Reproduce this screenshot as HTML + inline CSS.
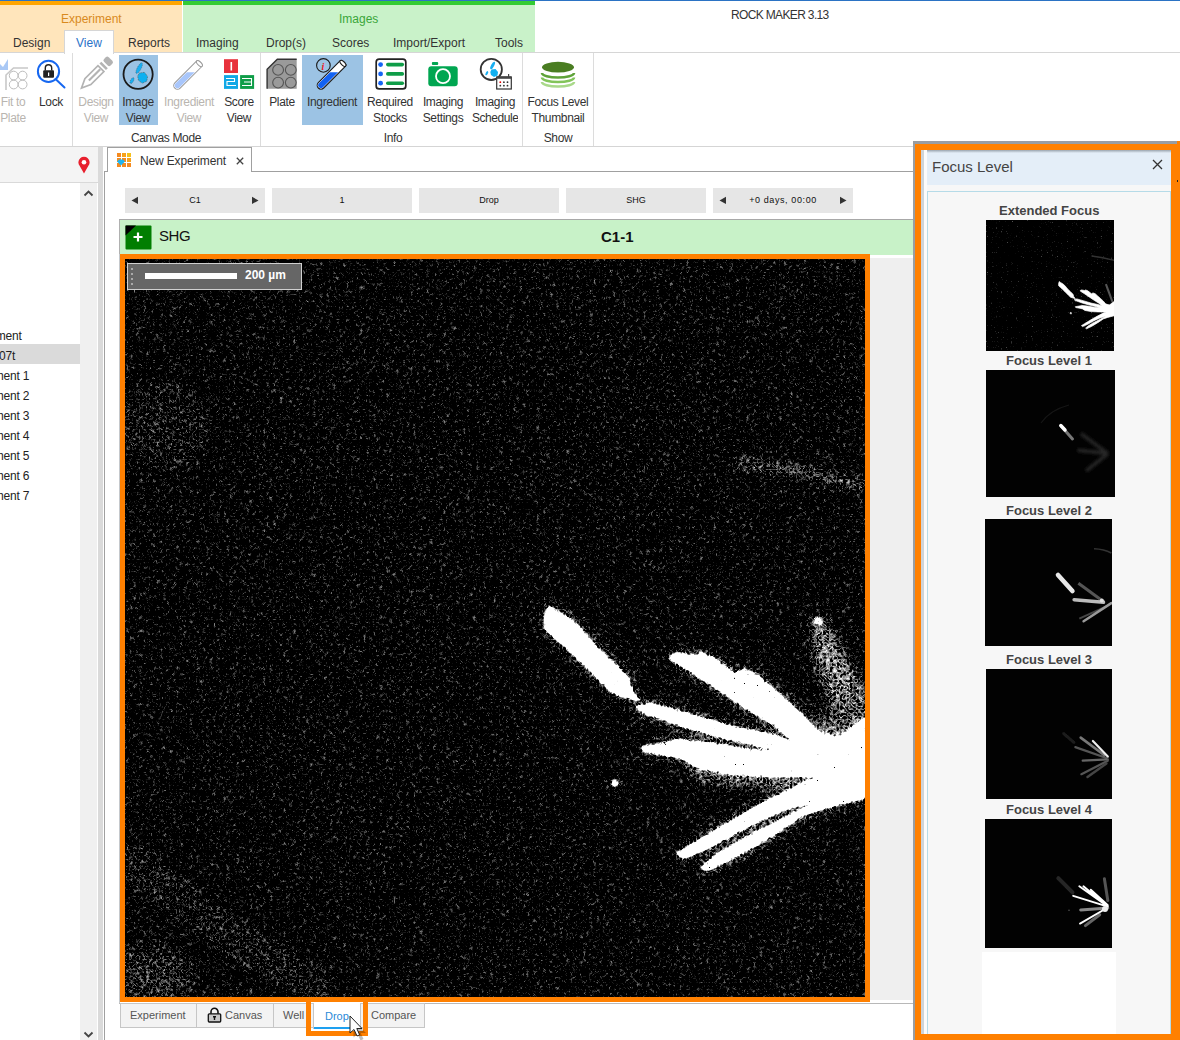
<!DOCTYPE html>
<html><head><meta charset="utf-8">
<style>
*{margin:0;padding:0;box-sizing:border-box}
html,body{width:1180px;height:1040px;overflow:hidden;background:#fff;font-family:"Liberation Sans",sans-serif;color:#222;position:relative}
.a{position:absolute}
.t{position:absolute;white-space:nowrap;line-height:1}
.c{text-align:center}
.rb{font-size:12px;letter-spacing:-0.35px;color:#333;width:80px;text-align:center}
.dis{color:#b9b5b0}
.ls{font-size:12px;letter-spacing:-0.2px;color:#222}
.bt{font-size:11px;color:#555}
.fl{font-size:13px;font-weight:bold;color:#444}
.th{background:#000;overflow:hidden}
.nv{font-size:9px;color:#111;width:140px;text-align:center}
</style></head><body>
<!-- title bar / tabs -->
<div class="a" style="left:0;top:0;width:1180px;height:1px;background:#2b73c4"></div>
<div class="a" style="left:0;top:1px;width:182px;height:52px;background:#ffe5bb"></div>
<div class="a" style="left:0;top:1px;width:182px;height:4px;background:#ffa500"></div>
<div class="a" style="left:183px;top:1px;width:352px;height:52px;background:#c9f2c9"></div>
<div class="a" style="left:183px;top:1px;width:352px;height:4px;background:#33cc33"></div>
<div class="a" style="left:0;top:52px;width:1180px;height:1px;background:#d6d6d6"></div>
<div class="t" id="ttl" style="left:731px;top:9px;font-size:12px;letter-spacing:-0.65px;color:#333">ROCK MAKER 3.13</div>
<div class="t" style="left:61px;top:13px;font-size:12px;color:#d98a1e">Experiment</div>
<div class="t" style="left:339px;top:13px;font-size:12px;color:#3aa63a">Images</div>
<!-- View tab -->
<div class="a" style="left:64px;top:30px;width:50px;height:24px;background:#fff;border:1px solid #d6d6d6;border-bottom:none"></div>
<div class="t" style="left:13px;top:37px;font-size:12px;color:#333">Design</div>
<div class="t" style="left:76px;top:37px;font-size:12px;color:#2a72c8">View</div>
<div class="t" style="left:128px;top:37px;font-size:12px;color:#333">Reports</div>
<div class="t" style="left:196px;top:37px;font-size:12px;color:#333">Imaging</div>
<div class="t" style="left:266px;top:37px;font-size:12px;color:#333">Drop(s)</div>
<div class="t" style="left:332px;top:37px;font-size:12px;color:#333">Scores</div>
<div class="t" style="left:393px;top:37px;font-size:12px;color:#333">Import/Export</div>
<div class="t" style="left:495px;top:37px;font-size:12px;color:#333">Tools</div>

<!-- ribbon -->
<!-- ribbon separators -->
<div class="a" style="left:72px;top:53px;width:1px;height:93px;background:#dcdcdc"></div>
<div class="a" style="left:260px;top:53px;width:1px;height:93px;background:#dcdcdc"></div>
<div class="a" style="left:522px;top:53px;width:1px;height:93px;background:#dcdcdc"></div>
<div class="a" style="left:593px;top:53px;width:1px;height:93px;background:#dcdcdc"></div>
<!-- highlights -->
<div class="a" style="left:119px;top:55px;width:39px;height:70px;background:#9cc3e4"></div>
<div class="a" style="left:302px;top:55px;width:61px;height:70px;background:#9cc3e4"></div>
<!-- ribbon texts -->
<div class="t rb dis" style="left:-27px;top:96px">Fit to</div>
<div class="t rb dis" style="left:-27px;top:112px">Plate</div>
<div class="t rb" style="left:11px;top:96px">Lock</div>
<div class="t rb dis" style="left:56px;top:96px">Design</div>
<div class="t rb dis" style="left:56px;top:112px">View</div>
<div class="t rb" style="left:98px;top:96px">Image</div>
<div class="t rb" style="left:98px;top:112px">View</div>
<div class="t rb dis" style="left:149px;top:96px">Ingredient</div>
<div class="t rb dis" style="left:149px;top:112px">View</div>
<div class="t rb" style="left:199px;top:96px">Score</div>
<div class="t rb" style="left:199px;top:112px">View</div>
<div class="t rb" style="left:126px;top:132px">Canvas Mode</div>
<div class="t rb" style="left:242px;top:96px">Plate</div>
<div class="t rb" style="left:292px;top:96px">Ingredient</div>
<div class="t rb" style="left:350px;top:96px">Required</div>
<div class="t rb" style="left:350px;top:112px">Stocks</div>
<div class="t rb" style="left:353px;top:132px">Info</div>
<div class="t rb" style="left:403px;top:96px">Imaging</div>
<div class="t rb" style="left:403px;top:112px">Settings</div>
<div class="t rb" style="left:455px;top:96px">Imaging</div>
<div class="t rb" style="top:112px;width:46px;overflow:hidden;left:472px;text-align:left;letter-spacing:-0.45px">Schedule</div>
<div class="t rb" style="left:518px;top:96px">Focus Level</div>
<div class="t rb" style="left:518px;top:112px">Thumbnail</div>
<div class="t rb" style="left:518px;top:132px">Show</div>
<!-- ribbon icons -->
<svg class="a" style="left:0;top:54px" width="600" height="40" viewBox="0 54 600 40">
 <!-- fit to plate -->
 <path d="M0 64 L3 67 L8 59 L8 70 L0 70 Z" fill="#a9c8f5"/>
 <path d="M6 90 V75 L13.5 68 H28" fill="none" stroke="#c8c8c8" stroke-width="1.6"/>
 <g fill="none" stroke="#bdbdbd" stroke-width="1"><circle cx="13.7" cy="75.6" r="4.4"/><circle cx="22.6" cy="75.6" r="4.4"/><circle cx="13.7" cy="84.5" r="4.4"/><circle cx="22.6" cy="84.5" r="4.4"/></g>
 <!-- lock -->
 <circle cx="48.5" cy="71.4" r="10.6" fill="none" stroke="#1667f0" stroke-width="2"/>
 <path d="M55.5 79 L64.5 87.5" stroke="#1667f0" stroke-width="2" stroke-linecap="round"/>
 <path d="M45.3 70.5 V68 a3.2 3.2 0 0 1 6.4 0 V70.5" fill="none" stroke="#222" stroke-width="1.4"/>
 <rect x="43.2" y="70.2" width="10.8" height="7.6" rx="1" fill="#222"/>
 <path d="M48.6 72.5 v3.4" stroke="#fff" stroke-width="1.2"/>
 <!-- design view pencil -->
 <g transform="translate(81.5 88) rotate(-45)" fill="none" stroke="#b3b3b3" stroke-width="1.7">
  <path d="M0 0 L9 -4.2 H27.5 V4.2 H9 Z"/>
  <path d="M10.5 0 H26.5" stroke-width="2.2"/>
  <rect x="30" y="-4.6" width="2.6" height="9.2" fill="#b3b3b3" stroke="none"/>
  <rect x="34.5" y="-4.6" width="6.5" height="9.2" rx="2" fill="#b3b3b3" stroke="none"/>
 </g>
 <!-- image view -->
 <circle cx="138.1" cy="74.2" r="14.6" fill="none" stroke="#1a1a1a" stroke-width="1.8"/>
  <ellipse cx="139.2" cy="68.2" rx="6" ry="1.9" transform="rotate(-62 139.2 68.2)" fill="#18aef0" stroke="#3a5060" stroke-width="0.5" stroke-dasharray="1 1"/>
 <ellipse cx="132" cy="80.6" rx="3.2" ry="1.5" transform="rotate(-62 132 80.6)" fill="#18aef0" stroke="#3a5060" stroke-width="0.5" stroke-dasharray="1 1"/>
 <path d="M139.5 73 L144.5 72.3 L147.6 76.5 L146.8 81.2 L142.3 83.2 L138.5 80.5 L137.6 76 Z" fill="#0fb0f0" stroke="#6a5040" stroke-width="0.6" stroke-dasharray="1 0.8"/>
<!-- ingredient view test tube -->
 <clipPath id="cl1"><rect x="150" y="72.3" width="60" height="30"/></clipPath>
 <g transform="translate(177.5 85.5) rotate(-45)">
  <path d="M0 -3.8 H31 a1.8 3.8 0 0 1 0 7.6 H0 a3.8 3.8 0 0 1 0 -7.6 Z" fill="#fff" stroke="#9a9a9a" stroke-width="1"/>
  <ellipse cx="31" cy="0" rx="1.8" ry="3.8" fill="#fff" stroke="#9a9a9a" stroke-width="1"/>
 </g>
 <g clip-path="url(#cl1)"><g transform="translate(177.5 85.5) rotate(-45)"><path d="M0 -2.8 H28 V2.8 H0 a2.8 2.8 0 0 1 0 -5.6 Z" fill="#a8c6fb"/></g></g>
 <!-- score view -->
 <rect x="224" y="59.2" width="14" height="13.8" fill="#e8323c"/>
 <rect x="230.5" y="62" width="1.6" height="8.5" fill="#fff"/>
 <rect x="224" y="75.1" width="14" height="13.8" fill="#12a8e6"/>
 <path d="M226 78.5 H234.5 V81.5 H227 V85.5 H236" fill="none" stroke="#fff" stroke-width="1.1"/>
 <rect x="240.1" y="75.1" width="14" height="13.8" fill="#0f9d48"/>
 <path d="M242 78.5 H251.5 V85.5 H242 M244 82 H251.5" fill="none" stroke="#fff" stroke-width="1.1"/>
 <!-- plate -->
 <path d="M267.1 88.7 V69.3 L277.3 59.3 H296.7 V88.7 Z" fill="#9a9a9a"/>
 <path d="M267.1 88.7 V69.3 L277.3 59.3 H296.7" fill="none" stroke="#333" stroke-width="1.4"/>
 <g fill="none" stroke="#555" stroke-width="1.1"><circle cx="278.1" cy="69.9" r="5.4"/><circle cx="290.8" cy="69.9" r="5.4"/><circle cx="278.1" cy="82.6" r="5.4"/><circle cx="290.8" cy="82.6" r="5.4"/></g>
 <!-- ingredient -->
 <clipPath id="cl2"><rect x="300" y="72.2" width="60" height="30"/></clipPath>
 <g transform="translate(321 85.3) rotate(-45)">
  <path d="M0 -3.8 H31 a1.8 3.8 0 0 1 0 7.6 H0 a3.8 3.8 0 0 1 0 -7.6 Z" fill="#fff" stroke="#1a1a1a" stroke-width="1.1"/>
  <ellipse cx="31" cy="0" rx="1.8" ry="3.8" fill="#fff" stroke="#1a1a1a" stroke-width="1.1"/>
 </g>
 <g clip-path="url(#cl2)"><g transform="translate(321 85.3) rotate(-45)"><path d="M0 -2.8 H28 V2.8 H0 a2.8 2.8 0 0 1 0 -5.6 Z" fill="#1262f2"/></g></g>
 <circle cx="323.4" cy="65.4" r="6.8" fill="#9cc3e4" stroke="#1a1a1a" stroke-width="1.1"/>
 <text x="321.5" y="70" font-family="Liberation Serif" font-style="italic" font-weight="bold" font-size="10" fill="#ee1c24">i</text>
 <!-- required stocks -->
 <rect x="376.2" y="59.1" width="29.6" height="29.8" rx="3" fill="#fff" stroke="#222" stroke-width="1.7"/>
 <g fill="#1464f5"><circle cx="380.6" cy="64.6" r="2.4"/><circle cx="380.6" cy="73.9" r="2.4"/><circle cx="380.6" cy="83.2" r="2.4"/></g>
 <g stroke="#0f9d48" stroke-width="3.6" stroke-linecap="round"><path d="M387.8 64.6 H402.3"/><path d="M387.8 73.9 H402.3"/><path d="M387.8 83.2 H402.3"/></g>
 <!-- camera -->
 <rect x="428.3" y="66.3" width="29.4" height="19.9" rx="3" fill="#00a651"/>
 <rect x="431.9" y="62" width="6.3" height="3" rx="1" fill="#00a651"/>
 <circle cx="443" cy="76.2" r="7" fill="#00a651" stroke="#fff" stroke-width="1.8"/>
 <!-- imaging schedule -->
 <circle cx="491.3" cy="69.4" r="10.6" fill="none" stroke="#333" stroke-width="1.8"/>
  <ellipse cx="492.6" cy="65.5" rx="4.2" ry="1.5" transform="rotate(-62 492.6 65.5)" fill="#18aef0"/>
 <ellipse cx="486.8" cy="73.2" rx="2.3" ry="1.1" transform="rotate(-62 486.8 73.2)" fill="#18aef0"/>
 <path d="M491.5 69.5 L495.5 69 L498 72 L497.5 75.5 L494 77 L491 75 L490.3 72 Z" fill="#10b0f0"/>
<rect x="496.7" y="77" width="14.6" height="12" fill="#fff" stroke="#333" stroke-width="1.2"/>
 <rect x="496.7" y="76.4" width="14.6" height="2.4" fill="#444"/>
 <rect x="508" y="74" width="1.2" height="3" fill="#444"/>
 <g fill="#333"><circle cx="500.3" cy="82.2" r="0.9" fill="#e00"/><circle cx="503.9" cy="82.2" r="0.9"/><circle cx="507.5" cy="82.2" r="0.9"/><circle cx="500.3" cy="85.7" r="0.9"/><circle cx="503.9" cy="85.7" r="0.9"/><circle cx="507.5" cy="85.7" r="0.9"/></g>
 <!-- focus level -->
 <path d="M542 82 a16 4.5 0 0 0 32 0" fill="none" stroke="#a9d98a" stroke-width="2.6"/>
 <path d="M542 77.5 a16 4.5 0 0 0 32 0" fill="none" stroke="#82c45a" stroke-width="2.6"/>
 <path d="M542 73 a16 4.5 0 0 0 32 0" fill="none" stroke="#5fa33a" stroke-width="2.6"/>
 <ellipse cx="558" cy="67.2" rx="16" ry="5.4" fill="#4a7d22"/>
</svg>

<div class="a" style="left:0;top:146px;width:1180px;height:1px;background:#d5d5d5"></div>

<!-- left panel -->
<div class="a" style="left:0;top:147px;width:98px;height:35px;background:#f4f4f4"></div>
<div class="a" style="left:0;top:182px;width:98px;height:1px;background:#d9d9d9"></div>
<div class="a" style="left:80px;top:183px;width:17px;height:857px;background:#f0f0f0"></div>
<div class="a" style="left:98px;top:147px;width:5px;height:893px;background:#dadada"></div>
<div class="a" style="left:104px;top:171px;width:1px;height:869px;background:#a0a0a0"></div>


<!-- left panel contents -->
<svg class="a" style="left:76px;top:155px" width="16" height="20" viewBox="0 0 16 20">
 <path d="M8 18.5 L3.6 10.8 A5.6 5.6 0 1 1 12.4 10.8 Z" fill="#e8202e"/>
 <circle cx="8" cy="7.2" r="2.3" fill="#fff"/>
</svg>
<svg class="a" style="left:83px;top:188px" width="12" height="10" viewBox="0 0 12 10"><path d="M1.5 7.5 L5.5 3.5 L9.5 7.5" fill="none" stroke="#444" stroke-width="1.8"/></svg>
<svg class="a" style="left:83px;top:1030px" width="12" height="10" viewBox="0 0 12 10"><path d="M1.5 2.5 L5.5 6.5 L9.5 2.5" fill="none" stroke="#444" stroke-width="1.8"/></svg>
<div class="a" style="left:0;top:344px;width:80px;height:20px;background:#dadada"></div>
<div class="t ls" style="left:-37px;top:330px">Experiment</div>
<div class="t ls" style="left:-14px;top:350px">0307t</div>
<div class="t ls" style="left:-39px;top:370px">Experiment 1</div>
<div class="t ls" style="left:-39px;top:390px">Experiment 2</div>
<div class="t ls" style="left:-39px;top:410px">Experiment 3</div>
<div class="t ls" style="left:-39px;top:430px">Experiment 4</div>
<div class="t ls" style="left:-39px;top:450px">Experiment 5</div>
<div class="t ls" style="left:-39px;top:470px">Experiment 6</div>
<div class="t ls" style="left:-39px;top:490px">Experiment 7</div>

<!-- doc tab strip -->
<div class="a" style="left:104px;top:171px;width:809px;height:1px;background:#a0a0a0"></div>
<div class="a" style="left:107px;top:147px;width:145px;height:25px;background:#fff;border:1px solid #a0a0a0;border-bottom:none"></div>


<svg class="a" style="left:116px;top:152px" width="16" height="16" viewBox="0 0 16 16">
 <g fill="#f7a21b"><rect x="1" y="1" width="4" height="4" fill="#f58a1f"/><rect x="6" y="1" width="4" height="4"/><rect x="11" y="1" width="4" height="4" fill="#f5c01b"/>
 <rect x="1" y="6" width="4" height="4" fill="#f58a1f"/><rect x="6" y="6" width="4" height="4" fill="#f58a1f"/><rect x="11" y="6" width="4" height="4"/>
 <rect x="1" y="11" width="4" height="4" fill="#f58a1f"/><rect x="6" y="11" width="4" height="4" fill="#f58a1f"/><rect x="11" y="11" width="4" height="4" fill="#f58a1f"/></g>
 <path d="M1 9.5 L3 7.5 H7 L9 9.5 L5 13.5 Z" fill="#1fb5f0"/>
</svg>
<div class="t" style="left:140px;top:155px;font-size:12px;letter-spacing:-0.15px;color:#333">New Experiment</div>
<svg class="a" style="left:236px;top:157px" width="8" height="8" viewBox="0 0 8 8"><path d="M0.8 0.8 L7.2 7.2 M7.2 0.8 L0.8 7.2" stroke="#444" stroke-width="1.3"/></svg>

<!-- nav buttons -->
<div class="a" style="left:125px;top:188px;width:140px;height:25px;background:#e6e6e6"></div>
<div class="a" style="left:272px;top:188px;width:140px;height:25px;background:#e6e6e6"></div>
<div class="a" style="left:419px;top:188px;width:140px;height:25px;background:#e6e6e6"></div>
<div class="a" style="left:566px;top:188px;width:140px;height:25px;background:#e6e6e6"></div>
<div class="a" style="left:713px;top:188px;width:140px;height:25px;background:#e6e6e6"></div>


<svg class="a" style="left:0;top:0" width="900" height="220" viewBox="0 0 900 220">
 <g fill="#333">
 <path d="M131.5 200.4 L138 196.8 V204 Z"/><path d="M258.5 200.4 L252 196.8 V204 Z"/>
 <path d="M719.5 200.4 L726 196.8 V204 Z"/><path d="M846.5 200.4 L840 196.8 V204 Z"/>
 </g>
</svg>
<div class="t nv" style="left:125px;top:196px">C1</div>
<div class="t nv" style="left:272px;top:196px">1</div>
<div class="t nv" style="left:419px;top:196px">Drop</div>
<div class="t nv" style="left:566px;top:196px">SHG</div>
<div class="t nv" style="left:713px;top:196px;letter-spacing:0.6px">+0 days, 00:00</div>

<!-- green header -->
<div class="a" style="left:119px;top:219px;width:794px;height:36px;background:#c8f2c8;border-top:1px solid #a8a8a8;border-left:1px solid #b0b0b0"></div>


<svg class="a" style="left:125px;top:225px" width="27" height="25" viewBox="0 0 27 25">
 <rect x="0.5" y="0.5" width="26" height="24" rx="1" fill="#017e01"/>
 <path d="M0.5 0.5 H11 L0.5 10.5 Z" fill="#000"/>
 <path d="M8.5 12 H17.5 M13 7.5 V16.5" stroke="#fff" stroke-width="2.2"/>
</svg>
<div class="t" style="left:159px;top:228px;font-size:15px;letter-spacing:-0.4px;color:#111">SHG</div>
<div class="t" style="left:601px;top:229px;font-size:15px;font-weight:bold;color:#111">C1-1</div>

<!-- image -->
<div class="a" style="left:870px;top:258px;width:43px;height:742px;background:#efefef"></div>
<div class="a" style="left:119px;top:254px;width:1px;height:750px;background:#c4c8cc"></div>
<div class="a" style="left:120px;top:254px;width:750px;height:748px;background:#ff8000"></div>
<div class="a" id="img" style="left:125px;top:259px;width:740px;height:738px;background:#0a0a0a;overflow:hidden"><svg width="740" height="738" viewBox="125 259 740 738" style="position:absolute;left:0;top:0">
<defs>
<filter id="fx" x="125" y="259" width="740" height="738" filterUnits="userSpaceOnUse" color-interpolation-filters="sRGB">
 <feGaussianBlur in="SourceGraphic" stdDeviation="1" result="core"/>
 <feGaussianBlur in="SourceGraphic" stdDeviation="7" result="halo"/>
 <feComposite in="core" in2="halo" operator="arithmetic" k2="0.9" k3="0.35" result="mask"/>
 <feTurbulence type="turbulence" baseFrequency="0.3" numOctaves="1" seed="3" result="t"/>
 <feColorMatrix in="t" type="matrix" values="-1 0 0 0 1  -1 0 0 0 1  -1 0 0 0 1  0 0 0 0 1" result="inv"/>
 <feTurbulence type="fractalNoise" baseFrequency="0.3" numOctaves="1" seed="9" result="n2"/>
 <feColorMatrix in="n2" type="matrix" values="1 0 0 0 0  1 0 0 0 0  1 0 0 0 0  0 0 0 0 1" result="g2"/>
 <feComposite in="inv" in2="g2" operator="arithmetic" k2="0.5" k3="0.3" result="base"/>
 <feComposite in="base" in2="mask" operator="arithmetic" k2="2" k3="1.0" k4="-1.248" result="sum"/>
 <feComponentTransfer in="sum"><feFuncR type="linear" slope="2.3"/><feFuncG type="linear" slope="2.3"/><feFuncB type="linear" slope="2.3"/><feFuncA type="linear" slope="0" intercept="1"/></feComponentTransfer>
</filter>
<filter id="fxb" x="-50%" y="-50%" width="200%" height="200%"><feGaussianBlur stdDeviation="10"/></filter>
<filter id="fxc" x="-50%" y="-50%" width="200%" height="200%"><feGaussianBlur stdDeviation="4"/></filter>
</defs>
<g filter="url(#fx)">
<rect x="125" y="259" width="740" height="738" fill="#000"/>
<ellipse cx="150" cy="975" rx="45" ry="30" fill="#161616" filter="url(#fxb)"/>
<path d="M125 850 Q200 930 330 990" fill="none" stroke="#0c0c0c" stroke-width="40" filter="url(#fxb)"/>
<ellipse cx="165" cy="425" rx="45" ry="45" fill="#0d0d0d" filter="url(#fxb)"/>
<path d="M735 462 Q800 470 866 486" fill="none" stroke="#333" stroke-width="9" filter="url(#fxc)"/>
<polygon points="812,624 822,616 838,640 852,668 866,690 866,752 846,735 828,698 814,660" fill="#3a3a3a" filter="url(#fxc)"/>
<polygon points="683,770 760,772 812,782 820,792 770,790 700,782" fill="#2a2a2a" filter="url(#fxc)"/>
<circle cx="845" cy="745" r="38" fill="#2a2a2a" filter="url(#fxb)"/>
<ellipse cx="818" cy="621" rx="4.5" ry="3.5" fill="#bbb"/>
<polygon points="548.5,605.4 555.2,610.1 572.5,620.5 582.9,630.9 596.7,647.0 611.7,660.9 627.9,677.0 632.5,690.9 638.3,697.8 640.7,701.1 632.7,699.4 614.4,693.9 600.6,681.3 582.1,662.8 566.0,647.8 554.4,637.4 545.2,629.4 544.7,616.6" fill="#fff"/>
<polygon points="670.7,655.1 677.8,652.5 695.6,656 700.9,652.5 713.4,657.8 734.7,673.8 743.6,669.4 756.1,673.8 770.3,686.3 784.6,698.7 802.4,714.7 816.6,730.8 838,738 866,718 866,798 829,807 802.4,816 775.7,834 740,855 706.3,871.5 701,867.5 717,854 749,835.5 784.6,817.7 818,801 784.6,810 749,826 713.4,845.6 683.1,859 676.5,853.5 694,843 731.2,820.8 766.8,801 802.4,783 818,777 772.4,776.2 731.7,774.2 697.1,768.1 680.8,758 644.2,751.8 641.2,746.8 670.7,742.2 676.8,739.6 711.4,743.2 752,750.3 784,751 762.2,746.8 721.5,737.6 680.8,725.9 638.1,711.2 636.1,706.1 650.3,703 691,714.2 731.7,726.4 772.4,734.6 794,743 777,727 750,711 723.5,693.2 696.5,675.6 669.5,658.8" fill="#fff"/>
<circle cx="615" cy="783" r="3" fill="#fff"/>
</g>
</svg></div>

<div class="a" style="left:119px;top:1003px;width:794px;height:1px;background:#b8b8b8"></div>

<div class="a" style="left:127px;top:263px;width:175px;height:27px;background:#666;border:1px solid #d0d0d0"></div>
<div class="a" style="left:131px;top:268px;width:1.5px;height:19px;background:repeating-linear-gradient(#aaa 0 2px,transparent 2px 5px)"></div>
<div class="a" style="left:145px;top:273px;width:92px;height:6px;background:#fff"></div>
<div class="t" style="left:245px;top:269px;font-size:12px;font-weight:bold;color:#fff">200 µm</div>

<!-- bottom tabs -->
<div class="a" style="left:120px;top:1003px;width:305px;height:25px;background:#f3f3f3;border:1px solid #c6c6c6"></div>
<div class="a" style="left:196px;top:1003px;width:1px;height:25px;background:#c6c6c6"></div>
<div class="a" style="left:273px;top:1003px;width:1px;height:25px;background:#c6c6c6"></div>
<div class="a" style="left:367px;top:1003px;width:1px;height:25px;background:#c6c6c6"></div>
<div class="a" style="left:313px;top:1003px;width:48px;height:26px;background:#fff;border-left:1px solid #c6c6c6;border-right:1px solid #c6c6c6"></div>
<div class="a" style="left:314px;top:1027px;width:46px;height:2px;background:#1ea0f0"></div>
<div class="t bt" style="left:130px;top:1010px">Experiment</div>
<svg class="a" style="left:207px;top:1007px" width="15" height="16" viewBox="0 0 15 16">
 <path d="M4 7 V4.8 a3.5 3.5 0 0 1 7 0 V7" fill="none" stroke="#111" stroke-width="1.6"/>
 <rect x="1.3" y="6.8" width="12.4" height="8.2" rx="1" fill="#c8c8c8" stroke="#111" stroke-width="1.3"/>
 <path d="M6 9.7 H9 M7.5 9.7 V13" stroke="#111" stroke-width="1.4"/>
</svg>
<div class="t bt" style="left:225px;top:1010px">Canvas</div>
<div class="t bt" style="left:283px;top:1010px">Well</div>
<div class="t bt" style="left:325px;top:1011px;color:#2a8ad8">Drop</div>
<div class="t bt" style="left:371px;top:1010px">Compare</div>
<!-- drop highlight -->
<div class="a" style="left:306px;top:1000px;width:62px;height:36px;border:5px solid #ff8000;border-top:none"></div>
<!-- cursor -->
<svg class="a" style="left:346px;top:1012px" width="24" height="28" viewBox="0 0 24 28">
 <path d="M6 7 L6 24 L10 20.5 L13 27 L16 25.6 L13.2 19.5 L18.5 19.5 Z" fill="#000" opacity="0.25" transform="translate(1.5 1.5)"/>
 <path d="M4 4 L4 21 L8 17.5 L11 24 L13.6 22.8 L10.8 16.5 L16 16.5 Z" fill="#fff" stroke="#222" stroke-width="1"/>
</svg>


<!-- focus panel -->
<div class="a" style="left:913px;top:141px;width:264px;height:899px;background:#999da2"></div>
<div class="a" style="left:915px;top:144px;width:265px;height:896px;background:#ff8000"></div>
<div class="a" style="left:921px;top:150px;width:250px;height:884px;background:#f7f7f7"></div>
<div class="a" style="left:921px;top:150px;width:250px;height:35px;background:#e4eef8"></div>
<div class="a" style="left:927px;top:191px;width:244px;height:843px;border:1px solid #b6dbe8;border-bottom:none"></div>

<div class="a" style="left:921px;top:150px;width:250px;height:3px;background:linear-gradient(#9aa4ae,#e4eef8)"></div>
<div class="a" style="left:921px;top:150px;width:3px;height:884px;background:#cfd4d8"></div>
<div class="a" style="left:924px;top:150px;width:3px;height:884px;background:#fbfbfb"></div>
<div class="t" style="left:932px;top:159px;font-size:15px;color:#444">Focus Level</div>
<svg class="a" style="left:1152px;top:159px" width="11" height="11" viewBox="0 0 11 11"><path d="M1 1 L10 10 M10 1 L1 10" stroke="#333" stroke-width="1.3"/></svg>
<div class="t fl" style="left:999px;top:204px">Extended Focus</div>
<div class="t fl" style="left:1006px;top:354px">Focus Level 1</div>
<div class="t fl" style="left:1006px;top:504px">Focus Level 2</div>
<div class="t fl" style="left:1006px;top:653px">Focus Level 3</div>
<div class="t fl" style="left:1006px;top:803px">Focus Level 4</div>
<div class="a" style="left:982px;top:952px;width:134px;height:82px;background:#fff"></div>
<div class="a th" id="th0" style="left:986px;top:220px;width:128px;height:131px"><svg width="128" height="131" viewBox="986 220 128 131" style="position:absolute;left:0;top:0"><defs><filter id="tb0" x="-20%" y="-20%" width="140%" height="140%"><feGaussianBlur stdDeviation="0.5"/></filter><filter id="tbb0" x="-50%" y="-50%" width="200%" height="200%"><feGaussianBlur stdDeviation="1.5"/></filter></defs><filter id="tn" x="986" y="220" width="128" height="131" filterUnits="userSpaceOnUse" color-interpolation-filters="sRGB"><feTurbulence type="fractalNoise" baseFrequency="0.8" seed="4"/><feColorMatrix type="matrix" values="2 0 0 0 -1.33  2 0 0 0 -1.33  2 0 0 0 -1.33  0 0 0 0 1"/></filter><rect x="986" y="220" width="128" height="131" fill="#000" filter="url(#tn)"/>
<g transform="translate(986 220) scale(0.173 0.1777) translate(-125 -259)">
 <path d="M735 462 Q800 470 866 486" fill="none" stroke="#333" stroke-width="8" filter="url(#tbb0)"/>
 <path d="M818 620 L862 735" stroke="#555" stroke-width="12" filter="url(#tbb0)"/>
 <circle cx="845" cy="760" r="30" fill="#555" filter="url(#tbb0)"/>
 <g fill="#fff" stroke="#fff" stroke-width="4" stroke-linejoin="round" filter="url(#tb0)"><polygon points="548.5,605.4 555.2,610.1 572.5,620.5 582.9,630.9 596.7,647.0 611.7,660.9 627.9,677.0 632.5,690.9 638.3,697.8 640.7,701.1 632.7,699.4 614.4,693.9 600.6,681.3 582.1,662.8 566.0,647.8 554.4,637.4 545.2,629.4 544.7,616.6"/><polygon points="670.7,655.1 677.8,652.5 695.6,656 700.9,652.5 713.4,657.8 734.7,673.8 743.6,669.4 756.1,673.8 770.3,686.3 784.6,698.7 802.4,714.7 816.6,730.8 838,738 866,718 866,798 829,807 802.4,816 775.7,834 740,855 706.3,871.5 701,867.5 717,854 749,835.5 784.6,817.7 818,801 784.6,810 749,826 713.4,845.6 683.1,859 676.5,853.5 694,843 731.2,820.8 766.8,801 802.4,783 818,777 772.4,776.2 731.7,774.2 697.1,768.1 680.8,758 644.2,751.8 641.2,746.8 670.7,742.2 676.8,739.6 711.4,743.2 752,750.3 784,751 762.2,746.8 721.5,737.6 680.8,725.9 638.1,711.2 636.1,706.1 650.3,703 691,714.2 731.7,726.4 772.4,734.6 794,743 777,727 750,711 723.5,693.2 696.5,675.6 669.5,658.8"/><circle cx="615" cy="783" r="4"/></g>
</g></svg></div>
<div class="a th" id="th1" style="left:986px;top:370px;width:129px;height:127px"><svg width="129" height="127" viewBox="986 370 129 127" style="position:absolute;left:0;top:0"><defs><filter id="tb1" x="-20%" y="-20%" width="140%" height="140%"><feGaussianBlur stdDeviation="0.5"/></filter><filter id="tbb1" x="-50%" y="-50%" width="200%" height="200%"><feGaussianBlur stdDeviation="1.5"/></filter></defs><rect x="986" y="370" width="129" height="127" fill="#020202"/>
<path d="M1041 423 Q1050 410 1069 405" fill="none" stroke="#151515" stroke-width="1.2"/>
<path d="M1081 433.7 L1107.9 453.6 M1077.6 450.2 L1107.9 453.6 M1086.2 470.9 L1107.9 453.6" stroke="#262626" stroke-width="3.5" filter="url(#tbb1)"/>
<path d="M1061 426 L1072.5 439" stroke="#777" stroke-width="3" stroke-linecap="round" filter="url(#tb1)"/>
<path d="M1060.8 425.5 L1065 430" stroke="#fff" stroke-width="3.4" stroke-linecap="round"/></svg></div>
<div class="a th" id="th2" style="left:985px;top:519px;width:127px;height:127px"><svg width="127" height="127" viewBox="985 519 127 127" style="position:absolute;left:0;top:0"><defs><filter id="tbb2" x="-20%" y="-20%" width="140%" height="140%"><feGaussianBlur stdDeviation="0.5"/></filter><filter id="tbb2" x="-50%" y="-50%" width="200%" height="200%"><feGaussianBlur stdDeviation="1.5"/></filter></defs><rect x="985" y="519" width="127" height="127" fill="#020202"/>
<path d="M1094 548.7 Q1104 549 1111.3 553" fill="none" stroke="#333" stroke-width="1.5"/>
<g filter="url(#tbb2)">
<path d="M1078.4 583.3 L1104.4 602.3" stroke="#555" stroke-width="3"/>
<path d="M1079.3 618.7 L1107.9 605.7" stroke="#444" stroke-width="2"/>
<path d="M1074.1 599.7 L1103.5 602.3" stroke="#bbb" stroke-width="3.5" stroke-linecap="round"/>
<path d="M1083.6 621.3 L1111.3 603.1" stroke="#999" stroke-width="2.5" stroke-linecap="round"/>
<circle cx="1101.8" cy="600.6" r="2" fill="#ddd"/>
<path d="M1058 575 L1072.4 591" stroke="#e8e8e8" stroke-width="4.6" stroke-linecap="round"/>
</g></svg></div>
<div class="a th" id="th3" style="left:986px;top:669px;width:126px;height:130px"><svg width="126" height="130" viewBox="986 669 126 130" style="position:absolute;left:0;top:0"><defs><filter id="tb3" x="-20%" y="-20%" width="140%" height="140%"><feGaussianBlur stdDeviation="0.5"/></filter><filter id="tbb3" x="-50%" y="-50%" width="200%" height="200%"><feGaussianBlur stdDeviation="1.5"/></filter></defs><rect x="986" y="669" width="126" height="130" fill="#020202"/>
<g filter="url(#tb3)" stroke-linecap="round">
<path d="M1063.7 733.6 L1073.9 742.4" stroke="#1c1c1c" stroke-width="3"/>
<path d="M1075.3 747.1 L1106.4 758" stroke="#555" stroke-width="2.2"/>
<path d="M1082.7 760.7 L1107.8 759.3" stroke="#666" stroke-width="2.2"/>
<path d="M1081.4 774.2 L1107.8 760.7" stroke="#555" stroke-width="2.2"/>
<path d="M1087.5 777 L1106.4 763.4" stroke="#444" stroke-width="2.5"/>
<path d="M1080.7 737.6 L1104.4 755.3" stroke="#777" stroke-width="2.6"/>
<path d="M1092.9 741 L1107.8 756.6" stroke="#eee" stroke-width="2.2"/>
</g></svg></div>
<div class="a th" id="th4" style="left:985px;top:819px;width:127px;height:129px"><svg width="127" height="129" viewBox="985 819 127 129" style="position:absolute;left:0;top:0"><defs><filter id="tb4" x="-20%" y="-20%" width="140%" height="140%"><feGaussianBlur stdDeviation="0.5"/></filter><filter id="tbb4" x="-50%" y="-50%" width="200%" height="200%"><feGaussianBlur stdDeviation="1.5"/></filter></defs><rect x="985" y="819" width="127" height="129" fill="#020202"/>
<g filter="url(#tb4)" stroke-linecap="round">
<path d="M1058.3 878.1 L1072.5 892.4" stroke="#262626" stroke-width="4"/>
<path d="M1104.4 878.8 L1107.8 900.5" stroke="#555" stroke-width="3"/>
<path d="M1080.7 910 L1107.8 908" stroke="#888" stroke-width="3"/>
<path d="M1085.4 925.6 L1099.7 914.7" stroke="#666" stroke-width="3"/>
<path d="M1079.3 886.3 L1107.8 906.6 M1083.4 886.3 L1107.8 906.6 M1090.8 889.7 L1107.8 905.3 M1073.2 895.8 L1107.8 906.6 M1080 923.6 L1106 908.5" stroke="#fff" stroke-width="1.9"/>
<circle cx="1105" cy="909" r="3" fill="#eee"/>
<circle cx="1069" cy="910.3" r="0.8" fill="#555"/>
</g></svg></div>
<div class="a" style="left:1177px;top:141px;width:3px;height:4px;background:#ff8000"></div>
<div class="a" style="left:1177px;top:180px;width:1px;height:2px;background:#222"></div>
</body></html>
